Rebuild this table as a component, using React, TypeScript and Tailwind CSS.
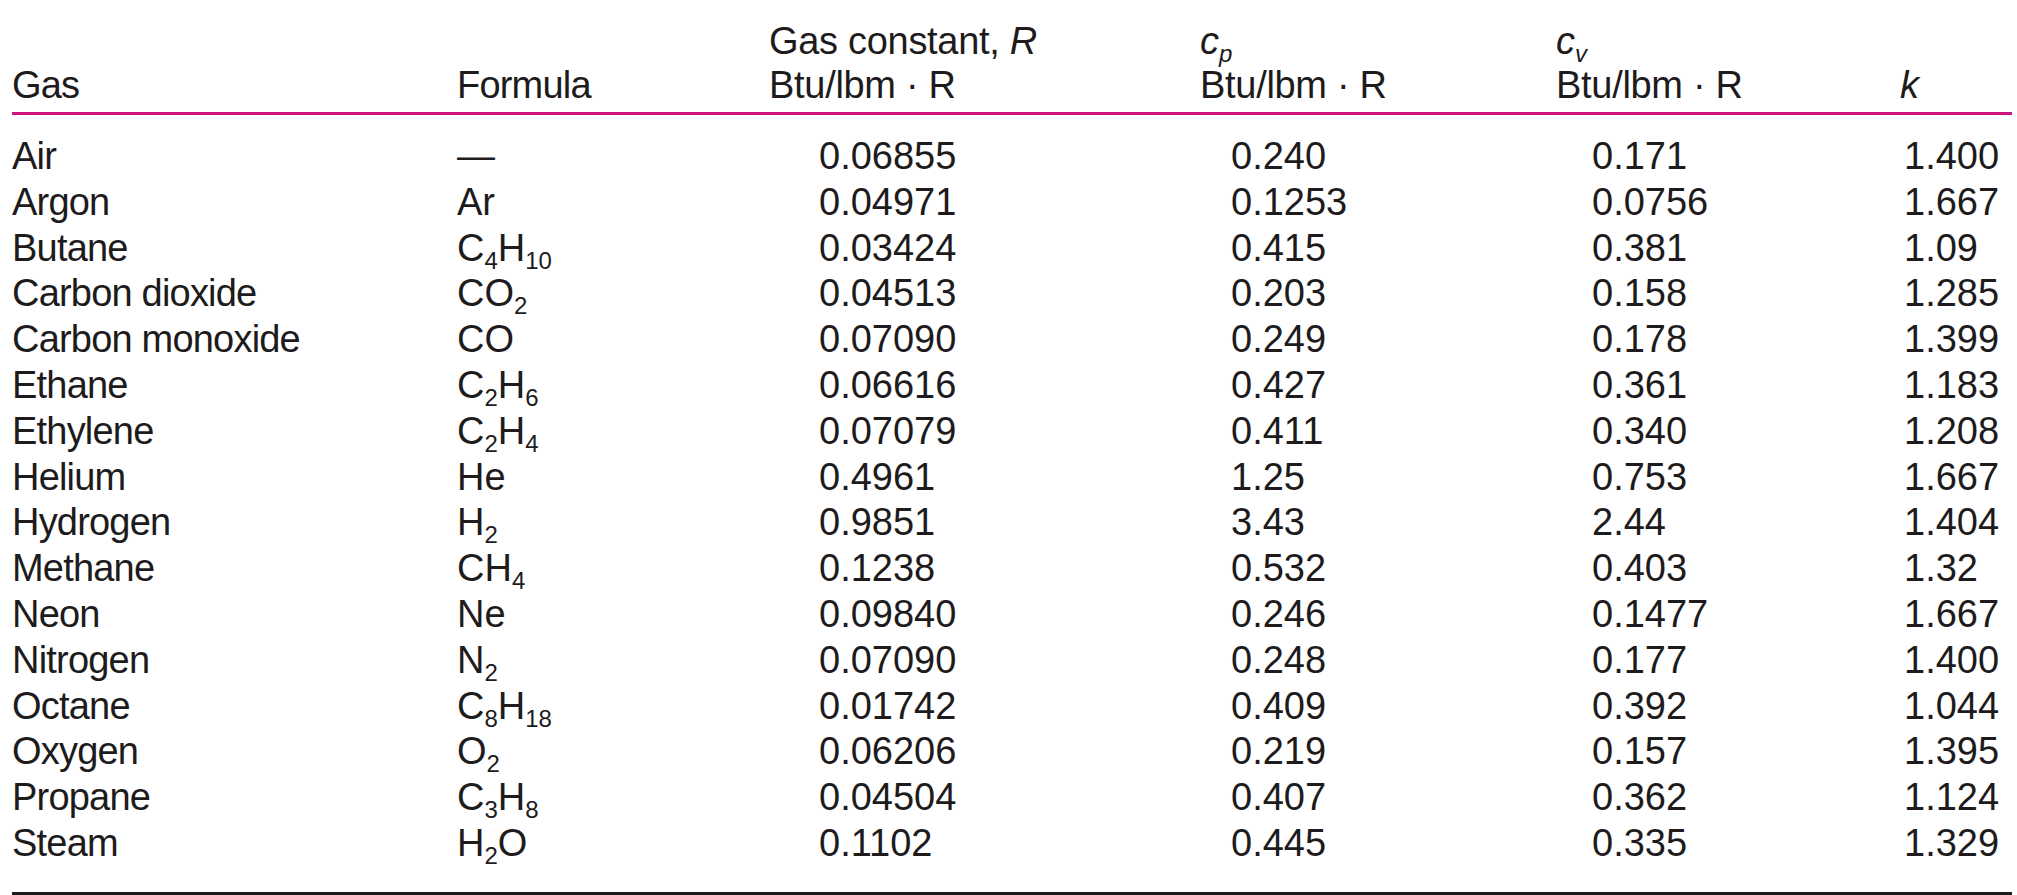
type Part = [string, boolean?];

const rows: { gas: string; formula: Part[]; r: string; cp: string; cv: string; k: string }[] = [
  { gas: "Air", formula: [["—"]], r: "0.06855", cp: "0.240", cv: "0.171", k: "1.400" },
  { gas: "Argon", formula: [["Ar"]], r: "0.04971", cp: "0.1253", cv: "0.0756", k: "1.667" },
  { gas: "Butane", formula: [["C"], ["4", true], ["H"], ["10", true]], r: "0.03424", cp: "0.415", cv: "0.381", k: "1.09" },
  { gas: "Carbon dioxide", formula: [["CO"], ["2", true]], r: "0.04513", cp: "0.203", cv: "0.158", k: "1.285" },
  { gas: "Carbon monoxide", formula: [["CO"]], r: "0.07090", cp: "0.249", cv: "0.178", k: "1.399" },
  { gas: "Ethane", formula: [["C"], ["2", true], ["H"], ["6", true]], r: "0.06616", cp: "0.427", cv: "0.361", k: "1.183" },
  { gas: "Ethylene", formula: [["C"], ["2", true], ["H"], ["4", true]], r: "0.07079", cp: "0.411", cv: "0.340", k: "1.208" },
  { gas: "Helium", formula: [["He"]], r: "0.4961", cp: "1.25", cv: "0.753", k: "1.667" },
  { gas: "Hydrogen", formula: [["H"], ["2", true]], r: "0.9851", cp: "3.43", cv: "2.44", k: "1.404" },
  { gas: "Methane", formula: [["CH"], ["4", true]], r: "0.1238", cp: "0.532", cv: "0.403", k: "1.32" },
  { gas: "Neon", formula: [["Ne"]], r: "0.09840", cp: "0.246", cv: "0.1477", k: "1.667" },
  { gas: "Nitrogen", formula: [["N"], ["2", true]], r: "0.07090", cp: "0.248", cv: "0.177", k: "1.400" },
  { gas: "Octane", formula: [["C"], ["8", true], ["H"], ["18", true]], r: "0.01742", cp: "0.409", cv: "0.392", k: "1.044" },
  { gas: "Oxygen", formula: [["O"], ["2", true]], r: "0.06206", cp: "0.219", cv: "0.157", k: "1.395" },
  { gas: "Propane", formula: [["C"], ["3", true], ["H"], ["8", true]], r: "0.04504", cp: "0.407", cv: "0.362", k: "1.124" },
  { gas: "Steam", formula: [["H"], ["2", true], ["O"]], r: "0.1102", cp: "0.445", cv: "0.335", k: "1.329" },
];

const cols = "grid grid-cols-[445px_312px_431px_356px_344px_112px]";

const Formula = ({ parts }: { parts: Part[] }) => (
  <>
    {parts.map(([text, sub], i) =>
      sub ? (
        <sub key={i} className="text-[24px] -bottom-2">
          {text}
        </sub>
      ) : (
        <span key={i}>{text}</span>
      )
    )}
  </>
);

const Unit = () => <div className="h-[44px] tracking-[-0.3px]">Btu/lbm · R</div>;

const App = () => {
  return (
    <div
      className="min-h-[895px] w-[2017px] bg-white pl-3 pt-[19px] text-[38px] text-[#1d1b1c]"
      style={{ fontFamily: '"Liberation Sans", Arial, sans-serif' }}
    >
      <div className="w-[2000px]">
        {/* Header */}
        <div className={`${cols} leading-[44px]`}>
          <div>
            <div className="h-[44px]" />
            <div className="h-[44px] tracking-[-0.8px]">Gas</div>
          </div>
          <div>
            <div className="h-[44px]" />
            <div className="h-[44px] tracking-[-0.8px]">Formula</div>
          </div>
          <div>
            <div className="h-[44px] tracking-[-0.3px]">
              Gas constant, <i>R</i>
            </div>
            <Unit />
          </div>
          <div>
            <div className="h-[44px]">
              <i>c</i>
              <sub className="text-[24px] -bottom-2 italic">p</sub>
            </div>
            <Unit />
          </div>
          <div>
            <div className="h-[44px]">
              <i>c</i>
              <sub className="text-[24px] -bottom-2 italic">v</sub>
            </div>
            <Unit />
          </div>
          <div>
            <div className="h-[44px]" />
            <div className="h-[44px]">
              <i>k</i>
            </div>
          </div>
        </div>

        <div className="mt-[5px] h-[3px] bg-[#cf137f]" />

        {/* Body */}
        <div className="mt-[19px]">
          {rows.map((row) => (
            <div key={row.gas} className={`${cols} h-[45.8px] leading-[45.8px]`}>
              <div className="tracking-[-0.8px]">{row.gas}</div>
              <div>
                <Formula parts={row.formula} />
              </div>
              <div className="pl-[50px]">{row.r}</div>
              <div className="pl-[31px]">{row.cp}</div>
              <div className="pl-[36px]">{row.cv}</div>
              <div className="pl-[4px]">{row.k}</div>
            </div>
          ))}
        </div>

        <div className="mt-[25px] h-[3px] bg-[#1d1b1c]" />
      </div>
    </div>
  );
};

export default App;
